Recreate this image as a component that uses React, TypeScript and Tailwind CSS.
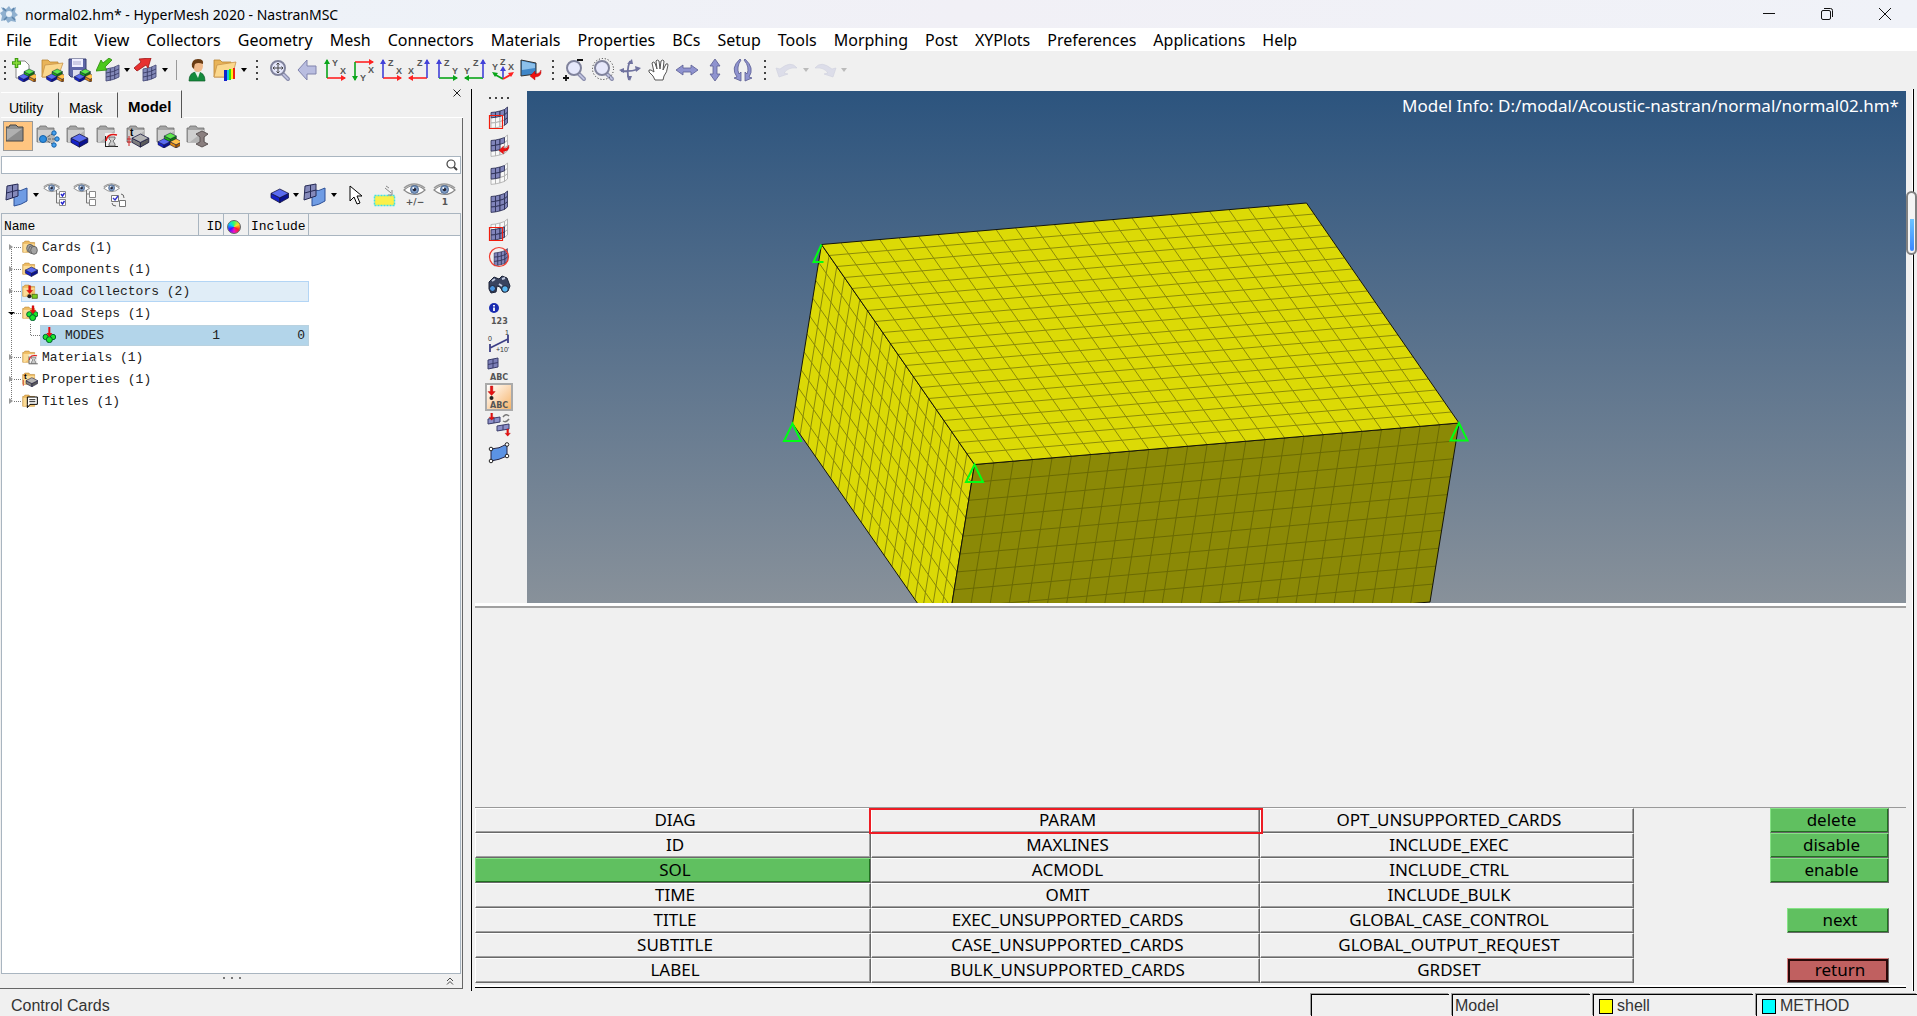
import { useState, type ReactNode } from "react";
import clsx from "clsx";

const MENUS = [
  "File", "Edit", "View", "Collectors", "Geometry", "Mesh", "Connectors", "Materials", "Properties",
  "BCs", "Setup", "Tools", "Morphing", "Post", "XYPlots", "Preferences", "Applications", "Help",
];

const CARDS = [
  ["DIAG", "PARAM", "OPT_UNSUPPORTED_CARDS"],
  ["ID", "MAXLINES", "INCLUDE_EXEC"],
  ["SOL", "ACMODL", "INCLUDE_CTRL"],
  ["TIME", "OMIT", "INCLUDE_BULK"],
  ["TITLE", "EXEC_UNSUPPORTED_CARDS", "GLOBAL_CASE_CONTROL"],
  ["SUBTITLE", "CASE_UNSUPPORTED_CARDS", "GLOBAL_OUTPUT_REQUEST"],
  ["LABEL", "BULK_UNSUPPORTED_CARDS", "GRDSET"],
];

const ACTIONS = ["delete", "disable", "enable", "", "next", "", "return"];

/* ---------- icon primitives, all on a 24x24 grid ---------- */

type At = { x?: number; y?: number; s?: number };

const place = ({ x = 0, y = 0, s = 1 }: At) => `translate(${x} ${y}) scale(${s})`;

function Icon({ size = 24, children }: { size?: number; children: ReactNode }) {
  return (
    <svg width={size} height={size} viewBox="0 0 24 24" fill="none" className="shrink-0" aria-hidden="true">
      {children}
    </svg>
  );
}

const CUBE_COLORS = {
  blue: ["#5a6cf0", "#1420c8", "#0a1290"],
  green: ["#5ee84a", "#1cae14", "#0c7a08"],
  orange: ["#ffc04a", "#e08a10", "#a85f04"],
  gray: ["#b4b4b4", "#7e7e7e", "#5a5a5a"],
};

// flat slab, 16 wide and 12 high
function Cube({ color, ...at }: At & { color: keyof typeof CUBE_COLORS }) {
  const [top, left, right] = CUBE_COLORS[color];
  return (
    <g transform={place(at)} stroke="#10103a" strokeWidth=".7" strokeLinejoin="round">
      <path d="M0 4v4l8 4.500V8z" fill={left} />
      <path d="M16 4v4l-8 4.500V8z" fill={right} />
      <path d="M0 4l8-4 8 4-8 4z" fill={top} />
    </g>
  );
}

function Cubes(at: At) {
  return (
    <g transform={place(at)}>
      <Cube color="green" x={5.5} y={0} s={0.65} />
      <Cube color="blue" x={0} y={5} s={0.65} />
      <Cube color="orange" x={10.5} y={5} s={0.65} />
    </g>
  );
}

function Folder({ gray, ...at }: At & { gray?: boolean }) {
  return (
    <g transform={place(at)}>
      <path
        d="M1 4h2l1-2h6l1.500 2H18v14H1z"
        fill={gray ? "#a4a4a4" : "#eebb62"}
        stroke={gray ? "#6f6f6f" : "#b98430"}
        strokeWidth=".8"
      />
      <path d="M2 6h16v12H2z" fill={gray ? "#cfcfcf" : "#fbdc98"} />
      <path d="M4 18L18 7v11z" fill={gray ? "#b4b4b4" : "#f0c070"} />
    </g>
  );
}

function Sheet(at: At) {
  return (
    <g transform={place(at)}>
      <path d="M0 4q8-1 13-4v12q-5 3-13 4z" fill="#8288b8" stroke="#4a4e7c" strokeWidth=".9" />
      <path d="M0 8q8-1 13-4M0 12q8-1 13-4M4.300 3.500v12M8.700 2.200v12" stroke="#33365f" strokeWidth=".8" />
    </g>
  );
}

function Surface(at: At) {
  return (
    <g transform={place(at)}>
      <path d="M9 7q7 2 13-2v13q-6 4-13 5z" fill="#6f9ce4" stroke="#2c4f96" />
      <path d="M2 3l11-2v12L1 17z" fill="#8489ba" stroke="#262a55" />
      <path d="M7.500 2v13M1.500 10l11.500-3" stroke="#262a55" />
    </g>
  );
}

function EyeShape() {
  return (
    <g>
      <path d="M1 7q10-9 21 0-10 9-21 0z" fill="#fdfdfd" stroke="#888" strokeWidth="1.200" />
      <path d="M1 5q10-8 21 0" stroke="#9a9a9a" strokeWidth="1.400" />
      <circle cx="11.500" cy="6.500" r="4" fill="#7f9cc4" stroke="#4e6a92" />
      <circle cx="11.500" cy="6.500" r="1.700" fill="#223" />
      <circle cx="10.300" cy="5" r="1" fill="#fff" />
    </g>
  );
}

function RedArrowDown(at: At) {
  return (
    <g transform={place(at)}>
      <path d="M3 0h3v7h3l-4.500 5L0 7h3z" fill="#e81010" stroke="#a00" strokeWidth=".5" />
    </g>
  );
}

function RedSwoosh(at: At) {
  return <path transform={place(at)} d="M11 0q1 7-6 7v3L0 6l5-5v3q5 0 6-4z" fill="#ee1111" stroke="#a00" strokeWidth=".4" />;
}

function Bell(at: At) {
  return (
    <g transform={place(at)}>
      <path d="M0 0h12v13H0z" fill="#f0f0f0" />
      <path d="M.500 13V3M0 13.500h13" stroke="#222" />
      <path d="M1 8q1-8 11-6" stroke="#e01515" strokeWidth="1.500" />
      <path d="M4 4h6v2L8 8l2 3v2H4v-2l2-3-2-2z" fill="#ccc" stroke="#555" strokeWidth=".8" />
    </g>
  );
}

function Nodes() {
  return (
    <g>
      <path d="M8 15l10-6M8 15h12M8 15l10 6" stroke="#666" strokeDasharray="3 1" />
      <circle cx="7" cy="15" r="3.500" fill="#2f8ee0" stroke="#1561a8" />
      <circle cx="18" cy="9" r="2.200" fill="#45a0ee" stroke="#1561a8" />
      <circle cx="21" cy="15" r="2.200" fill="#45a0ee" stroke="#1561a8" />
      <circle cx="18" cy="21" r="2.200" fill="#45a0ee" stroke="#1561a8" />
    </g>
  );
}

const RED = "#f22";
const GREEN = "#0aa51a";
const BLUE = "#4242d8";

type Axis = { label: string; color: string; dir: "up" | "down" | "left" | "right" };

// two-axis view icon; origin sits in the corner that both arrows leave
function AxisIcon({ h, v }: { h: Axis; v: Axis }) {
  const ox = h.dir === "right" ? 4 : 20;
  const oy = v.dir === "up" ? 20 : 4;
  const hx = h.dir === "right" ? 22 : 2;
  const vy = v.dir === "up" ? 2 : 22;
  const hs = h.dir === "right" ? 1 : -1;
  const vs = v.dir === "up" ? 1 : -1;
  return (
    <Icon>
      <path d={`M${ox} ${oy}H${hx}`} stroke={h.color} strokeWidth="1.600" />
      <path d={`M${hx + hs} ${oy}l${-5 * hs} -3v6z`} fill={h.color} />
      <path d={`M${ox} ${oy}V${vy}`} stroke={v.color} strokeWidth="1.600" />
      <path d={`M${ox} ${vy - vs}l-3 ${5 * vs}h6z`} fill={v.color} />
      <g fontSize="9" fontWeight="700" fill="#555" fontFamily="Liberation Sans">
        <text x={h.dir === "right" ? 17 : 1} y={oy === 20 ? 16 : 15}>{h.label}</text>
        <text x={h.dir === "right" ? 9 : 10} y={oy === 20 ? 8 : 23}>{v.label}</text>
      </g>
    </Icon>
  );
}

function Lens({ dotted, cross }: { dotted?: boolean; cross?: boolean }) {
  return (
    <g>
      <path d="M15 15l6 6" stroke="#8c8fae" strokeWidth="4" strokeLinecap="round" />
      <path d="M15 15l6 6" stroke="#c4c7e4" strokeWidth="1.500" strokeLinecap="round" />
      <circle cx="11" cy="10" r="7" fill="#e6e8fb" stroke="#80839c" strokeWidth="2" />
      {dotted && <circle cx="12" cy="11" r="10.500" stroke="#222" strokeDasharray="1 2" />}
      {cross && (
        <path d="M11 5v10M6 10h10M9.500 6.500L11 5l1.500 1.500M9.500 13.500L11 15l1.500-1.500M7.500 8.500L6 10l1.500 1.500M14.500 8.500L16 10l-1.500 1.500" stroke="#444" />
      )}
    </g>
  );
}

const violet = { fill: "#8f93cf", stroke: "#5a5d92", strokeWidth: 0.8 };

const UndoIcon = ({ flip }: { flip?: boolean }) => (
  <Icon>
    <path
      transform={flip ? "translate(24 0) scale(-1 1)" : undefined}
      d="M1 10l3 9 9-3-4-1q4-6 13-5Q16 2 5 11z"
      fill="#dcdde9"
      stroke="#cfd0de"
      strokeWidth=".6"
    />
  </Icon>
);

/* ---------- toolbar icons ---------- */

const icons = {
  newModel: (
    <Icon>
      <path d="M4 3h9l4 4v13H4z" fill="#fff" stroke="#888" />
      <path d="M4.500 0v10M0 5h9" stroke="#3c9a10" strokeWidth="3.600" />
      <path d="M4.500 1v8M1 5h7" stroke="#8ee03c" strokeWidth="1.400" />
      <Cubes x={6.5} y={11} />
    </Icon>
  ),
  open: (
    <Icon>
      <path d="M2 2h6l2 2h8v15H2z" fill="#e9b458" stroke="#b98430" strokeWidth=".8" />
      <path d="M5 7l18-2-5 14H2z" fill="#fbd88e" stroke="#c8934a" strokeWidth=".8" />
      <Cubes x={6.5} y={11} />
    </Icon>
  ),
  save: (
    <Icon>
      <path d="M1 1h17v18H3l-2-2z" fill="#5e66a8" stroke="#363c70" />
      <path d="M4 1h11v8H4z" fill="#eef" />
      <path d="M5 4h8M5 6h8" stroke="#aac" />
      <path d="M5 12h9v7H5z" fill="#dde" />
      <Cubes x={6.5} y={11} />
    </Icon>
  ),
  importMesh: (
    <Icon>
      <Sheet x={10} y={7} />
      <path d="M16 2l-3-2-6 5-2-3-5 11 11-1-2-3z" fill="#4cc81c" stroke="#2a8a0a" strokeWidth=".8" />
    </Icon>
  ),
  exportMesh: (
    <Icon>
      <Sheet x={9} y={7} />
      <path d="M0 10l3 3 9-6 2 3 3-10L5 1l2 3z" fill="#e83030" stroke="#9c1414" strokeWidth=".8" />
    </Icon>
  ),
  user: (
    <Icon>
      <path d="M4 23q0-9 8-9t8 9z" fill="#148a3c" stroke="#0b5c26" strokeWidth=".7" />
      <path d="M10 14h5l-2 6z" fill="#e8f4ea" />
      <ellipse cx="13" cy="8" rx="5" ry="6" fill="#f0b98a" />
      <path d="M7 9q-1-8 6-8 6 0 5 5-5-2-8 0-1 2-1 5z" fill="#6a3c14" />
    </Icon>
  ),
  results: (
    <Icon>
      <path d="M1 2h6l2 2h9v15H1z" fill="#e9b458" stroke="#b98430" strokeWidth=".8" />
      <path d="M4 7l19-3-4 15H1z" fill="#fbd88e" stroke="#c8934a" strokeWidth=".8" />
      <path d="M11 12h3v11h-3z" fill="#12c" />
      <path d="M14 12h2v10h-2z" fill="#1cd" />
      <path d="M16 11h2v11h-2z" fill="#3d1" />
      <path d="M18 11h2v10h-2z" fill="#fe1" />
      <path d="M20 10h2v11h-2z" fill="#e21" />
    </Icon>
  ),
  fit: (
    <Icon>
      <Lens cross />
    </Icon>
  ),
  back: (
    <Icon>
      <path d="M3 12l9-10v6h9v8h-9v6z" fill="#b9bde0" stroke="#8184ad" />
    </Icon>
  ),
  iso: (
    <Icon>
      <path d="M12 21V10" stroke={BLUE} strokeWidth="1.600" />
      <path d="M12 8l-3 5h6z" fill={BLUE} />
      <path d="M12 21L3 16" stroke={GREEN} strokeWidth="1.800" />
      <path d="M1 14l6 1-3 4z" fill={GREEN} />
      <path d="M12 21l9-5" stroke={RED} strokeWidth="1.800" />
      <path d="M23 14l-6 1 3 4z" fill={RED} />
      <g fontSize="9" fontWeight="700" fill="#555" fontFamily="Liberation Sans">
        <text x="9" y="7">Z</text>
        <text x="1" y="12">Y</text>
        <text x="17" y="12">X</text>
      </g>
    </Icon>
  ),
  userView: (
    <Icon>
      <path d="M2 2l15 3v11L2 18z" fill="#3f86c8" stroke="#333" />
      <path d="M3 3l13 3v4L3 12z" fill="#8cc0ea" />
      <RedSwoosh x={11} y={12} />
    </Icon>
  ),
  zoomInOut: (
    <Icon>
      <Lens />
      <path d="M14 2h6M0 20h6M3 17v6" stroke="#111" strokeWidth="1.800" />
    </Icon>
  ),
  circleZoom: (
    <Icon>
      <Lens dotted />
    </Icon>
  ),
  rotate: (
    <Icon>
      <path d="M10 22q-3-9 1-19M2 13q9 1 18-2" stroke="#70739f" strokeWidth="1.800" />
      <path d="M13 1l-5 5h6zM22 10l-6-2 1 6zM0 12l5-2v5zM11 23l-3-5h5z" fill="#70739f" />
    </Icon>
  ),
  pan: (
    <Icon>
      <path
        d="M8 22q-1-4-6-8-1-3 2-2l3 2L5 5q1-2 3 0l2 6-1-8q1-2 3 0l1 8 1-8q2-2 3 0l-1 9 3-6q2-1 2 1-1 8-4 11l-1 4z"
        fill="#fff"
        stroke="#555"
      />
    </Icon>
  ),
  panX: (
    <Icon>
      <path d="M1 12l7-5v3h8V7l7 5-7 5v-3H8v3z" {...violet} />
    </Icon>
  ),
  panY: (
    <Icon>
      <path d="M12 1l5 7h-3v8h3l-5 7-5-7h3V8H7z" {...violet} />
    </Icon>
  ),
  // two mirrored arcs, left pointing up and right pointing down
  spin: (
    <Icon>
      <path d="M9 1Q-1 10 6 19l-3 1 7 3V14l-2 2Q5 9 10 2z" {...violet} />
      <path d="M14 1q10 9 4 18l3 1-7 3V14l2 2q3-7-3-14z" {...violet} />
    </Icon>
  ),
  folderPlain: (
    <Icon>
      <path d="M0 3h3l1-2h6l2 2h5v14H0z" fill="#8f8f8f" stroke="#444" />
      <path d="M1 5h15v11H1z" fill="#b0b0b0" />
      <path d="M1 16L16 5v11z" fill="#8c8c8c" />
    </Icon>
  ),
  folderNodes: (
    <Icon>
      <Folder gray />
      <Nodes />
    </Icon>
  ),
  folderBlue: (
    <Icon>
      <Folder gray />
      <Cube color="blue" x={5} y={10} s={1.05} />
    </Icon>
  ),
  folderBell: (
    <Icon>
      <Folder gray />
      <Bell x={9} y={9} />
    </Icon>
  ),
  folderThickness: (
    <Icon>
      <Folder gray />
      <text x="4" y="12" fontSize="10" fontWeight="700" fill="#000" fontFamily="Liberation Sans">t</text>
      <path d="M3 12v10M1 15h4M1 18h4" stroke="#c22" />
      <Cube color="gray" x={6} y={10} s={1.05} />
    </Icon>
  ),
  folderCubes: (
    <Icon>
      <Folder gray />
      <Cubes x={2} y={9} s={1.15} />
    </Icon>
  ),
  folderBeam: (
    <Icon>
      <Folder gray />
      <path d="M10 10l6-3 6 3-4 3v5l4 2-6 3-6-3 4-2v-5z" fill="#8a7f7f" stroke="#5c5454" />
    </Icon>
  ),
  surface: (
    <Icon>
      <Surface />
    </Icon>
  ),
  slab: (
    <Icon>
      <Cube color="blue" x={6} y={6} s={1.1} />
    </Icon>
  ),
  cursor: (
    <Icon>
      <path d="M7 3v15l4-4 3 7 3-1-3-7h5z" fill="#fff" stroke="#000" />
    </Icon>
  ),
  highlight: (
    <Icon>
      <path d="M1.500 12.500h20v10h-20z" fill="#fbf04a" stroke="#3de0e8" strokeWidth="1.500" strokeDasharray="2 1" />
      <path d="M12 5l6 5M15 12h4V7M13 3l3 2" stroke="#888" />
    </Icon>
  ),
};

function EyeTree({ mode }: { mode: "on" | "off" | "swap" }) {
  return (
    <Icon>
      <g transform="scale(.75)">
        <EyeShape />
      </g>
      {mode === "swap" ? (
        <g>
          <path d="M8.500 12.500h7v6h-7zM16.500 17.500h6v6h-6z" fill="#fff" stroke="#777" />
          <path d="M10 15l2 2 3-4" stroke="#33c" strokeWidth="1.400" />
          <path d="M18 11q3 0 3 4M9 20q0 3 4 3" stroke="#666" />
        </g>
      ) : (
        <g>
          <path d="M13.500 7v13h4M13.500 11h3" stroke="#777" />
          <path d="M16.500 8.500h6v6h-6zM16.500 16.500h6v6h-6z" fill="#fff" stroke="#888" />
          {mode === "on" && <path d="M18 11l1.500 2 2-3M18 19l1.500 2 2-3" stroke="#22c" strokeWidth="1.400" />}
        </g>
      )}
    </Icon>
  );
}

function EyeLabel({ label }: { label: string }) {
  return (
    <Icon>
      <EyeShape />
      <text x="12" y="22" textAnchor="middle" fontSize="9" fontWeight="700" fill="#555" fontFamily="DejaVu Sans">
        {label}
      </text>
    </Icon>
  );
}

/* ---------- display toolbar ---------- */

const PATCH_X = [4, 8.5, 13, 17.5, 20.5];
const PATCH_Y = [7.5, 7, 6, 4.5, 2];

// curved mesh patch; each string is a row, "1" marks a shaded cell
function MeshPatch({ rows }: { rows: string[] }) {
  return (
    <g strokeWidth=".8">
      {[false, true].map((shaded) =>
        rows.flatMap((row, r) =>
          [...row].map((cell, c) => {
            if ((cell === "1") !== shaded) return null;
            const dy = r * 5.3;
            return (
              <path
                key={`${r}-${c}`}
                d={`M${PATCH_X[c]} ${PATCH_Y[c] + dy}L${PATCH_X[c + 1]} ${PATCH_Y[c + 1] + dy}v5.300L${PATCH_X[c]} ${PATCH_Y[c] + dy + 5.3}z`}
                fill={shaded ? "#8084ba" : "#f8f8f8"}
                stroke={shaded ? "#26294f" : "#a8a8a8"}
              />
            );
          }),
        ),
      )}
    </g>
  );
}

const ALL = ["1111", "1111", "1111"];
const PART = ["1110", "1100", "0000"];

const caption = { fontSize: 8, fontWeight: 700, fill: "#555", fontFamily: "DejaVu Sans" };

const DISPLAY_TOOLS: { name: string; icon: ReactNode }[] = [
  {
    name: "Mask",
    icon: (
      <Icon>
        <MeshPatch rows={["1111", "0001", "0001"]} />
        <path d="M2.500 10.500h13v13h-13z" stroke="#f21d0d" strokeWidth="1.200" />
      </Icon>
    ),
  },
  { name: "Reverse mask", icon: <Icon><MeshPatch rows={PART} /><RedSwoosh x={12} y={12} s={0.9} /></Icon> },
  { name: "Unmask adjacent", icon: <Icon><MeshPatch rows={PART} /></Icon> },
  { name: "Unmask all", icon: <Icon><MeshPatch rows={ALL} /></Icon> },
  {
    name: "Mask not shown",
    icon: (
      <Icon>
        <MeshPatch rows={["0000", "1110", "1110"]} />
        <path d="M2.500 10.500h13v13h-13z" stroke="#f21d0d" strokeWidth="1.200" />
      </Icon>
    ),
  },
  {
    name: "Spherical clipping",
    icon: (
      <Icon>
        <g transform="translate(4 2) scale(.8)">
          <MeshPatch rows={ALL} />
        </g>
        <circle cx="12" cy="12" r="9.500" stroke="#f03c30" strokeWidth="1.200" />
      </Icon>
    ),
  },
  {
    name: "Find",
    icon: (
      <Icon>
        <path d="M2 9l5-5 5 2 3-3 5 2 3 8-2 5-5 1-3-5-3-1-1 6-5 1-2-4z" fill="#39435f" stroke="#1c2338" />
        <path d="M5 8l3-2M15 6l3-1M12 11l3 2" stroke="#c3cbe0" strokeWidth="2" />
        <circle cx="5.500" cy="15.500" r="3" fill="#4a93dc" stroke="#223" />
        <circle cx="18" cy="16" r="3.300" fill="#58b6f0" stroke="#223" />
      </Icon>
    ),
  },
  {
    name: "Numbers",
    icon: (
      <Icon>
        <circle cx="7" cy="7" r="5" fill="#1a2cb0" />
        <path d="M7 4v1.500M7 6.500V10" stroke="#fff" strokeWidth="1.800" />
        <text x="4" y="23" {...caption}>123</text>
      </Icon>
    ),
  },
  {
    name: "Measure",
    icon: (
      <Icon>
        <path d="M3 19l18-9M3 15v8M21 6v8" stroke="#3d3f86" strokeWidth="1.800" />
        <g fontSize="7" fill="#333" fontFamily="Liberation Sans">
          <text x="1" y="12">0</text>
          <text x="18" y="6">1</text>
          <text x="9" y="23">+10'</text>
        </g>
      </Icon>
    ),
  },
  {
    name: "Element labels",
    icon: (
      <Icon>
        <path d="M1 3l10-2v9L1 12zM6 2v9M1 7.500l10-2" fill="#7d80b8" stroke="#3b3d6b" />
        <text x="3" y="23" {...caption}>ABC</text>
      </Icon>
    ),
  },
  {
    name: "Load labels",
    icon: (
      <Icon>
        <RedArrowDown x={1} y={1} s={0.8} />
        <circle cx="4.500" cy="13" r="2" fill="#222" />
        <text x="3" y="23" {...caption}>ABC</text>
      </Icon>
    ),
  },
  {
    name: "Load distribution",
    icon: (
      <Icon>
        <path d="M1 6l12-2v5L1 11zM7 5v5M10 13l12-2v5l-12 2zM16 12v5" fill="#8c8fc8" stroke="#3b3d6b" />
        <RedArrowDown x={2} y={0} s={0.6} />
        <RedArrowDown x={18} y={16} s={0.6} />
        <path d="M16 4q3-4 6-1M22 6q-3 4-6 2" stroke="#777" strokeWidth="1.500" />
      </Icon>
    ),
  },
  {
    name: "Surface edges",
    icon: (
      <Icon>
        <path d="M4 8q8 0 16-5v12q-8 4-16 5z" fill="#5b93e4" stroke="#224" />
        <g fill="#fff" stroke="#222">
          <circle cx="4" cy="8" r="1.800" />
          <circle cx="20" cy="3.500" r="1.800" />
          <circle cx="20" cy="15" r="1.800" />
          <circle cx="4" cy="20" r="1.800" />
        </g>
      </Icon>
    ),
  },
];

/* ---------- small layout pieces ---------- */

function ToolButton({ label, children }: { label: string; children: ReactNode }) {
  return (
    <button type="button" aria-label={label} className="flex h-7 w-7 shrink-0 items-center justify-center">
      {children}
    </button>
  );
}

function Caret({ muted }: { muted?: boolean }) {
  return (
    <button type="button" aria-label="More" className="flex h-7 w-[10px] shrink-0 items-center justify-center">
      <svg width="6" height="4" aria-hidden="true">
        <path d="M0 0h6L3 4z" fill={muted ? "#bbb" : "#000"} />
      </svg>
    </button>
  );
}

function Grip({ className }: { className?: string }) {
  return (
    <div className={clsx("flex shrink-0 flex-col items-center gap-1", className)}>
      {[0, 1, 2, 3].map((i) => (
        <span key={i} className="h-[2px] w-[2px] bg-[#444]" />
      ))}
    </div>
  );
}

function MainToolbar() {
  return (
    <div className="flex h-[38px] shrink-0 items-center bg-[#f0f0f0]">
      <Grip className="w-[10px]" />
      <ToolButton label="New">{icons.newModel}</ToolButton>
      <ToolButton label="Open">{icons.open}</ToolButton>
      <ToolButton label="Save">{icons.save}</ToolButton>
      <ToolButton label="Import">{icons.importMesh}</ToolButton>
      <Caret />
      <ToolButton label="Export">{icons.exportMesh}</ToolButton>
      <Caret />
      <div className="mx-[6px] h-5 w-px bg-[#999]" />
      <ToolButton label="User profiles">{icons.user}</ToolButton>
      <ToolButton label="Results">{icons.results}</ToolButton>
      <Caret />
      <Grip className="w-4" />
      <ToolButton label="Fit">{icons.fit}</ToolButton>
      <ToolButton label="Previous view">{icons.back}</ToolButton>
      <ToolButton label="XY top">
        <AxisIcon h={{ label: "X", color: RED, dir: "right" }} v={{ label: "Y", color: GREEN, dir: "up" }} />
      </ToolButton>
      <ToolButton label="XY bottom">
        <AxisIcon h={{ label: "X", color: RED, dir: "right" }} v={{ label: "Y", color: GREEN, dir: "down" }} />
      </ToolButton>
      <ToolButton label="XZ left">
        <AxisIcon h={{ label: "X", color: RED, dir: "right" }} v={{ label: "Z", color: BLUE, dir: "up" }} />
      </ToolButton>
      <ToolButton label="XZ right">
        <AxisIcon h={{ label: "X", color: RED, dir: "left" }} v={{ label: "Z", color: BLUE, dir: "up" }} />
      </ToolButton>
      <ToolButton label="YZ front">
        <AxisIcon h={{ label: "Y", color: GREEN, dir: "right" }} v={{ label: "Z", color: BLUE, dir: "up" }} />
      </ToolButton>
      <ToolButton label="YZ rear">
        <AxisIcon h={{ label: "Y", color: GREEN, dir: "left" }} v={{ label: "Z", color: BLUE, dir: "up" }} />
      </ToolButton>
      <ToolButton label="Isometric">{icons.iso}</ToolButton>
      <ToolButton label="User view">{icons.userView}</ToolButton>
      <Grip className="w-4" />
      <ToolButton label="Zoom in or out">{icons.zoomInOut}</ToolButton>
      <ToolButton label="Circle zoom">{icons.circleZoom}</ToolButton>
      <ToolButton label="Rotate">{icons.rotate}</ToolButton>
      <ToolButton label="Pan">{icons.pan}</ToolButton>
      <ToolButton label="Rotate left and right">{icons.panX}</ToolButton>
      <ToolButton label="Rotate up and down">{icons.panY}</ToolButton>
      <ToolButton label="Spin">{icons.spin}</ToolButton>
      <Grip className="w-4" />
      <ToolButton label="Undo"><UndoIcon /></ToolButton>
      <Caret muted />
      <ToolButton label="Redo"><UndoIcon flip /></ToolButton>
      <Caret muted />
    </div>
  );
}

/* ---------- model browser ---------- */

const smallFolder = <Folder x={0} y={1} s={1.05} />;

const ROWS: { name: string; icon: ReactNode; open?: boolean; hover?: boolean; child?: boolean; id?: string; include?: string }[] = [
  {
    name: "Cards (1)",
    icon: (
      <g>
        {smallFolder}
        <g fill="#a4a4a4" stroke="#555" strokeWidth="1.200">
          <ellipse cx="12" cy="14" rx="5" ry="6" />
          <ellipse cx="15" cy="16" rx="5" ry="6" />
          <ellipse cx="18" cy="17" rx="5" ry="6" />
        </g>
      </g>
    ),
  },
  { name: "Components (1)", icon: <g>{smallFolder}<Cube color="blue" x={5} y={9} s={1.15} /></g> },
  {
    name: "Load Collectors (2)",
    hover: true,
    icon: (
      <g>
        {smallFolder}
        <RedArrowDown x={7} y={4} />
        <circle cx="11" cy="20" r="3" fill="#222" />
        <path d="M15 17h8v6h-8z" fill="#7c2" stroke="#350" />
      </g>
    ),
  },
  {
    name: "Load Steps (1)",
    open: true,
    icon: (
      <g>
        {smallFolder}
        <g fill="#1ce62a" stroke="#053" strokeWidth="1.400">
          <circle cx="11" cy="14" r="4" />
          <circle cx="20" cy="14" r="4" />
          <circle cx="16" cy="19" r="4.500" />
        </g>
        <RedArrowDown x={12} y={1} />
      </g>
    ),
  },
  {
    name: "MODES",
    child: true,
    id: "1",
    include: "0",
    icon: (
      <g>
        <g fill="#1ce62a" stroke="#053" strokeWidth="1.400">
          <circle cx="7" cy="15" r="4" />
          <circle cx="18" cy="15" r="4" />
          <circle cx="12.500" cy="19" r="4.500" />
        </g>
        <path d="M11 0h3v9h3l-4.500 6L8 9h3z" fill="#e81010" />
      </g>
    ),
  },
  { name: "Materials (1)", icon: <g>{smallFolder}<Bell x={10} y={8} s={1.05} /></g> },
  {
    name: "Properties (1)",
    icon: (
      <g>
        {smallFolder}
        <text x="3" y="12" fontSize="12" fontWeight="700" fill="#000" fontFamily="Liberation Sans">t</text>
        <path d="M2 14v9" stroke="#c22" strokeWidth="1.500" strokeDasharray="2 1" />
        <Cube color="gray" x={6} y={10} s={1.1} />
      </g>
    ),
  },
  {
    name: "Titles (1)",
    icon: (
      <g>
        {smallFolder}
        <path d="M8 6h15v11H12l-4 5v-5z" fill="#fff" stroke="#000" strokeWidth="1.500" />
        <path d="M11 10h9M11 13h9" stroke="#000" strokeWidth="1.300" />
      </g>
    ),
  },
];

function Branch({ index, open, child }: { index: number; open?: boolean; child?: boolean }) {
  const first = index === 0;
  const last = index === ROWS.length - 1;
  return (
    <svg width={child ? 38 : 19} height="22" fill="none" className="shrink-0" aria-hidden="true">
      <path d={`M9.500 ${first ? 11 : 0}V${last ? 11 : 22}`} stroke="#777" strokeDasharray="1 1" />
      {child ? (
        <path d="M28.500 0V11.500H38" stroke="#777" strokeDasharray="1 1" />
      ) : (
        <path d="M12 11.500H19" stroke="#777" strokeDasharray="1 1" />
      )}
      {!child && (open ? <path d="M6 10h7l-3.500 3z" fill="#000" /> : <path d="M7 8v6l4-3z" fill="#999" />)}
    </svg>
  );
}

function ModelTree() {
  const th = "border-b border-r border-[#a9b5c0] p-0 pt-1 font-normal";
  return (
    <div className="min-h-0 flex-1 overflow-hidden border border-[#a9b5c0] bg-white font-['Liberation_Mono',monospace] text-[13px] leading-[17px] text-[#222]">
      <table className="w-full table-fixed border-separate border-spacing-0">
        <colgroup>
          <col className="w-[197px]" />
          <col className="w-[25px]" />
          <col className="w-[25px]" />
          <col className="w-[60px]" />
          <col />
        </colgroup>
        <thead>
          <tr className="h-[22px] bg-[#f0f0f0] text-black">
            <th className={clsx(th, "pl-[2px] text-left")}>Name</th>
            <th className={clsx(th, "pr-px text-right")}>ID</th>
            <th className={th} aria-label="Color">
              <span className="ml-[3px] block h-[14px] w-[14px] rounded-full border border-[#666] bg-[conic-gradient(#3f6,#fd2,#f22,#e1c,#41f,#0cf,#3f6)]" />
            </th>
            <th className={clsx(th, "pl-[2px] text-left")}>Include</th>
            <th className="border-b border-[#a9b5c0] p-0" />
          </tr>
        </thead>
        <tbody>
          {ROWS.map((row, i) => {
            const fill = clsx(
              "h-[21px] border-y",
              row.child ? "border-[#b9d2e0] bg-[#b3d5ea]" : row.hover ? "border-[#b3d5f5] bg-[#e0edf7]" : "border-transparent",
            );
            return (
              <tr key={row.name} className="h-[22px]">
                <td className="p-0">
                  <div className="flex items-center">
                    <Branch index={i} open={row.open} child={row.child} />
                    <div className={clsx("flex min-w-0 flex-1 items-center border-l whitespace-nowrap", fill)}>
                      <Icon size={16}>{row.icon}</Icon>
                      <span className={row.child ? "pl-2" : "pl-1"}>{row.name}</span>
                    </div>
                  </div>
                </td>
                <td className="p-0">
                  <div className={clsx("pt-px pr-1 text-right", fill)}>{row.id}</div>
                </td>
                <td className="p-0">
                  <div className={fill} />
                </td>
                <td className="p-0">
                  <div className={clsx("border-r pt-px pr-[3px] text-right", fill)}>{row.include}</div>
                </td>
                <td className="p-0" />
              </tr>
            );
          })}
        </tbody>
      </table>
    </div>
  );
}

function Browser() {
  const [tab, setTab] = useState("Model");
  const folders = [
    ["Model view", icons.folderPlain],
    ["Include view", icons.folderNodes],
    ["Component view", icons.folderBlue],
    ["Material view", icons.folderBell],
    ["Property view", icons.folderThickness],
    ["Assembly view", icons.folderCubes],
    ["Beam section view", icons.folderBeam],
  ] as const;

  return (
    <aside className="flex w-[463px] shrink-0 flex-col font-['Liberation_Sans',sans-serif] text-black">
      <div className="flex h-[29px] shrink-0 items-end gap-[2px] pl-px">
        {["Utility", "Mask", "Model"].map((name) => (
          <button
            key={name}
            type="button"
            onClick={() => setTab(name)}
            className={clsx(
              "border-t border-r border-t-white border-r-[#555] pl-2 text-left",
              tab === name ? "h-7 text-[15px] leading-8 font-bold" : "h-[26px] border-b border-b-white text-[14px] leading-[30px]",
              name === "Utility" ? "w-[58px]" : name === "Mask" ? "w-[57px]" : "w-[62px]",
            )}
          >
            {name}
          </button>
        ))}
        <div className="flex flex-1 justify-end self-stretch border-b border-white">
          <button type="button" aria-label="Close panel" className="h-[18px] w-[10px] pb-3">
            <svg width="8" height="8" viewBox="0 0 8 8" stroke="#222" aria-hidden="true">
              <path d="M.5 .5l7 7M7.500 .5l-7 7" />
            </svg>
          </button>
        </div>
      </div>

      <div className="flex min-h-0 flex-1 flex-col border-r border-b border-[#666] pr-px pl-px">
        <div className="flex h-[38px] shrink-0 items-center pb-[2px] pl-[2px]">
          {folders.map(([label, icon], i) => (
            <button
              key={label}
              type="button"
              aria-label={label}
              className={clsx("flex h-[30px] w-[30px] items-center justify-center", i === 0 && "border border-[#999] bg-[#ffc580]")}
            >
              {icon}
            </button>
          ))}
        </div>

        <label className="flex h-[18px] shrink-0 items-center border border-[#a9b5c0] bg-white pr-[2px]">
          <input aria-label="Search" className="h-4 min-w-0 flex-1 text-[13px] outline-none" />
          <svg width="12" height="12" viewBox="0 0 12 12" fill="none" stroke="#444" aria-hidden="true">
            <circle cx="5" cy="5" r="4" strokeWidth="1.200" />
            <path d="M8 8l3 3" strokeWidth="2" />
          </svg>
        </label>

        <div className="flex h-[39px] shrink-0 items-center gap-[2px] px-[2px] pt-[3px]">
          <div className="flex">
            <ToolButton label="Entities">{icons.surface}</ToolButton>
            <Caret />
            <ToolButton label="Show all"><EyeTree mode="on" /></ToolButton>
          </div>
          <ToolButton label="Show none"><EyeTree mode="off" /></ToolButton>
          <ToolButton label="Reverse shown"><EyeTree mode="swap" /></ToolButton>
          <div className="flex-1" />
          <div className="flex">
            <ToolButton label="Components">{icons.slab}</ToolButton>
            <Caret />
            <ToolButton label="Surfaces">{icons.surface}</ToolButton>
            <Caret />
          </div>
          <ToolButton label="Select">{icons.cursor}</ToolButton>
          <ToolButton label="Highlight">{icons.highlight}</ToolButton>
          <ToolButton label="Show or hide"><EyeLabel label="+/−" /></ToolButton>
          <ToolButton label="Isolate"><EyeLabel label="1" /></ToolButton>
        </div>

        <ModelTree />

        <div className="flex h-[14px] shrink-0 items-center">
          <div className="flex flex-1 justify-center gap-[6px] pb-[6px] pl-4">
            {[0, 1, 2].map((i) => (
              <span key={i} className="h-[2px] w-[2px] bg-[#777]" />
            ))}
          </div>
          <svg width="8" height="8" viewBox="0 0 8 8" fill="none" stroke="#444" className="mr-[7px]" aria-hidden="true">
            <path d="M1 4l3-3 3 3M1 7.500l3-3 3 3" />
          </svg>
        </div>
      </div>
      <div className="h-[2px] shrink-0" />
    </aside>
  );
}

function DisplayToolbar() {
  return (
    <div className="flex w-[52px] shrink-0 flex-col items-center pr-1">
      <div className="flex h-3 shrink-0 items-center gap-1 pt-px">
        {[0, 1, 2, 3].map((i) => (
          <span key={i} className="h-[2px] w-[2px] bg-[#444]" />
        ))}
      </div>
      {DISPLAY_TOOLS.map((tool) => (
        <button
          key={tool.name}
          type="button"
          aria-label={tool.name}
          className={clsx(
            "flex h-7 w-7 shrink-0 items-center justify-center",
            tool.name === "Load labels" && "border-2 border-[#aaa] bg-linear-to-br from-white to-[#f5b468]",
          )}
        >
          {tool.icon}
        </button>
      ))}
    </div>
  );
}

/* ---------- graphics area ---------- */

type Pt = [number, number];

// corners of the box in view coordinates
const A: Pt = [294.5, 153.5];
const B: Pt = [779.5, 112];
const C: Pt = [932, 332];
const D: Pt = [447.5, 373.5];
const DROP: Pt = [-29, 179];

const lower = (p: Pt): Pt => [p[0] + DROP[0], p[1] + DROP[1]];
const mix = (p: Pt, q: Pt, t: number) => `${(p[0] + (q[0] - p[0]) * t).toFixed(1)} ${(p[1] + (q[1] - p[1]) * t).toFixed(1)}`;

function Face({ p, nu, nv, fill, line }: { p: [Pt, Pt, Pt, Pt]; nu: number; nv: number; fill: string; line: string }) {
  const [a, b, c, d] = p;
  let grid = "";
  for (let i = 1; i < nu; i++) grid += `M${mix(a, b, i / nu)}L${mix(d, c, i / nu)}`;
  for (let j = 1; j < nv; j++) grid += `M${mix(a, d, j / nv)}L${mix(b, c, j / nv)}`;
  const outline = `M${a}L${b}L${c}L${d}z`;
  return (
    <g>
      <path d={outline} fill={fill} />
      <path d={grid} stroke={line} />
      <path d={outline} stroke="#15150a" />
    </g>
  );
}

function Viewport() {
  return (
    <div className="relative min-h-0 flex-1 overflow-hidden bg-linear-to-b from-[#2c547e] to-[#88919a]">
      <svg viewBox="0 0 1379 512" preserveAspectRatio="xMidYMin slice" fill="none" className="block h-full w-full" aria-label="Mesh model">
        <Face p={[A, D, lower(D), lower(A)]} nu={20} nv={10} fill="#dbd906" line="#88880a" />
        <Face p={[D, C, lower(C), lower(D)]} nu={25} nv={10} fill="#8b8906" line="#6a6a04" />
        <Face p={[A, B, C, D]} nu={25} nv={20} fill="#dcda06" line="#8b8a0a" />
        <g stroke="#00ff14" strokeWidth="2">
          <path d={`M${A[0]} ${A[1]}l-8 17.500h10`} />
          {[lower(A), D, C].map((p) => (
            <path key={p[0]} d={`M${p[0]} ${p[1]}l-8.500 17.500h17z`} />
          ))}
        </g>
      </svg>
      <p className="absolute top-[3px] right-[7px] text-[17px] leading-6 whitespace-nowrap text-white">
        Model Info: D:/modal/Acoustic-nastran/normal/normal02.hm*
      </p>
    </div>
  );
}

/* ---------- control cards ---------- */

const bevel = "border border-t-white border-l-white border-r-[#696969] border-b-[#696969] shadow-[inset_-1px_-1px_0_#a0a0a0]";
const bevelGreen =
  "border border-t-[#86e386] border-l-[#86e386] border-r-[#696969] border-b-[#696969] bg-[#60c060] shadow-[inset_-1px_-1px_0_#207020]";

function ControlCards() {
  return (
    <section className="shrink-0 border-t-2 border-[#a0a0a0] pt-[199px] text-[17px] text-black">
      <div className="grid grid-cols-[396fr_389fr_374fr_272fr] border-t border-[#999] pb-[2px]">
        {CARDS.map((row, r) => {
          const action = ACTIONS[r];
          return [
            ...row.map((card) => (
              <div key={card} className="relative flex h-[25px]">
                <button type="button" className={clsx("w-full pb-[2px] pl-1 leading-5", card === "SOL" ? bevelGreen : bevel)}>
                  {card}
                </button>
                {card === "PARAM" && (
                  <span className="pointer-events-none absolute -right-[3px] -bottom-px -left-[2px] top-0 z-10 border-2 border-[#ed1c24]" />
                )}
              </div>
            )),
            <div key={`action-${r}`} className="flex h-[25px] justify-end pr-[17px]">
              {action && (
                <button
                  type="button"
                  className={clsx(
                    "pb-[2px] pl-1 leading-5",
                    r < 3 ? "w-[119px]" : "w-[102px]",
                    action === "return"
                      ? "border border-[#d88080] border-r-[#696969] border-b-[#696969] bg-[#c06060] shadow-[inset_0_0_0_2px_#2a0808]"
                      : bevelGreen,
                  )}
                >
                  {action}
                </button>
              )}
            </div>,
          ];
        })}
      </div>
    </section>
  );
}

function StatusBar() {
  const cell = "flex items-center gap-1 border-t border-l border-t-black border-l-black pt-px pl-[2px] shadow-[-1px_-1px_0_#a0a0a0]";
  return (
    <footer className="flex h-[25px] shrink-0 gap-[3px] bg-[#f0f0f0] pt-[3px] font-['Liberation_Sans',sans-serif] text-[16px] leading-5 text-[#333]">
      <p className="flex-1 pt-[2px] pl-[11px]">Control Cards</p>
      <div className={clsx(cell, "w-[138px]")} />
      <div className={clsx(cell, "w-[138px]")}>Model</div>
      <div className={clsx(cell, "w-[160px] pl-[5px]")}>
        <span className="h-[15px] w-[14px] border border-black bg-[#ff0]" />
        shell
      </div>
      <div className={clsx(cell, "w-[161px] pl-[5px]")}>
        <span className="h-[15px] w-[14px] border border-black bg-[#0ff]" />
        METHOD
      </div>
    </footer>
  );
}

export default function App() {
  return (
    <div className="flex h-screen flex-col overflow-hidden bg-[#f0f0f0] font-['Noto_Sans',sans-serif]">
      <header className="flex h-7 shrink-0 items-center bg-linear-to-r from-[#ecf3f9] via-[#f1f0f6] to-[#f0f2f8] pr-[3px] text-black">
        <svg width="18" height="18" viewBox="0 0 18 18" className="mr-[7px]" aria-hidden="true">
          <path d="M1 2l5 2 3-3 2 3 5-2-1 5 3 3-3 2 1 5-5-1-3 2-2-3-5 1 1-5-2-3 3-2z" fill="#8fb0cf" />
          <path d="M3 3l3 3M14 3l-2 3M15 15l-3-3M4 15l3-3" stroke="#5c84ab" strokeWidth="1.500" />
          <circle cx="9" cy="9" r="3" fill="#eaf2f9" />
        </svg>
        <h1 className="flex-1 text-[14px]">normal02.hm* - HyperMesh 2020 - NastranMSC</h1>
        <button type="button" aria-label="Minimize" className="flex w-[58px] justify-center">
          <svg width="12" height="12" stroke="#111" aria-hidden="true"><path d="M0 5.500h12" /></svg>
        </button>
        <button type="button" aria-label="Restore" className="flex w-[58px] justify-center">
          <svg width="12" height="12" fill="none" stroke="#111" aria-hidden="true">
            <rect x=".5" y="2.500" width="9" height="9" rx="1.500" />
            <path d="M3 .5h6.500q2 0 2 2V9" />
          </svg>
        </button>
        <button type="button" aria-label="Close" className="flex w-[58px] justify-center">
          <svg width="12" height="12" stroke="#111" aria-hidden="true"><path d="M0 0l12 12M12 0L0 12" /></svg>
        </button>
      </header>

      <nav className="flex h-[23px] shrink-0 items-center gap-[17px] bg-white pl-[6px] text-[16px] leading-6 text-black">
        {MENUS.map((m) => (
          <button key={m} type="button">{m}</button>
        ))}
      </nav>

      <MainToolbar />

      <div className="relative flex min-h-0 flex-1">
        <Browser />
        <main className="ml-2 flex min-w-0 flex-1 border-l border-black pt-[2px] pl-[3px]">
          <div className="flex min-w-0 flex-1 flex-col">
            <div className="flex min-h-0 flex-1">
              <DisplayToolbar />
              <Viewport />
            </div>
            <div className="h-[3px] shrink-0 bg-white" />
            <ControlCards />
            <div className="mb-[3px] h-[3px] shrink-0 border-t-2 border-b border-t-white border-b-black" />
          </div>
        </main>
        <div className="w-2 shrink-0 border-r border-l-[6px] border-r-black border-l-[#f0f0f0] bg-white" />
        <div className="w-[3px] shrink-0" />
        <div className="absolute top-[102px] right-0 flex h-16 w-[11px] items-end justify-center rounded-full border-2 border-[#808080] bg-[#f4f4f4] pb-[2px]">
          <span className="h-8 w-1 rounded-b-full bg-linear-to-b from-[#6cc4ff] to-[#3a86ff]" />
        </div>
      </div>

      <StatusBar />
    </div>
  );
}
